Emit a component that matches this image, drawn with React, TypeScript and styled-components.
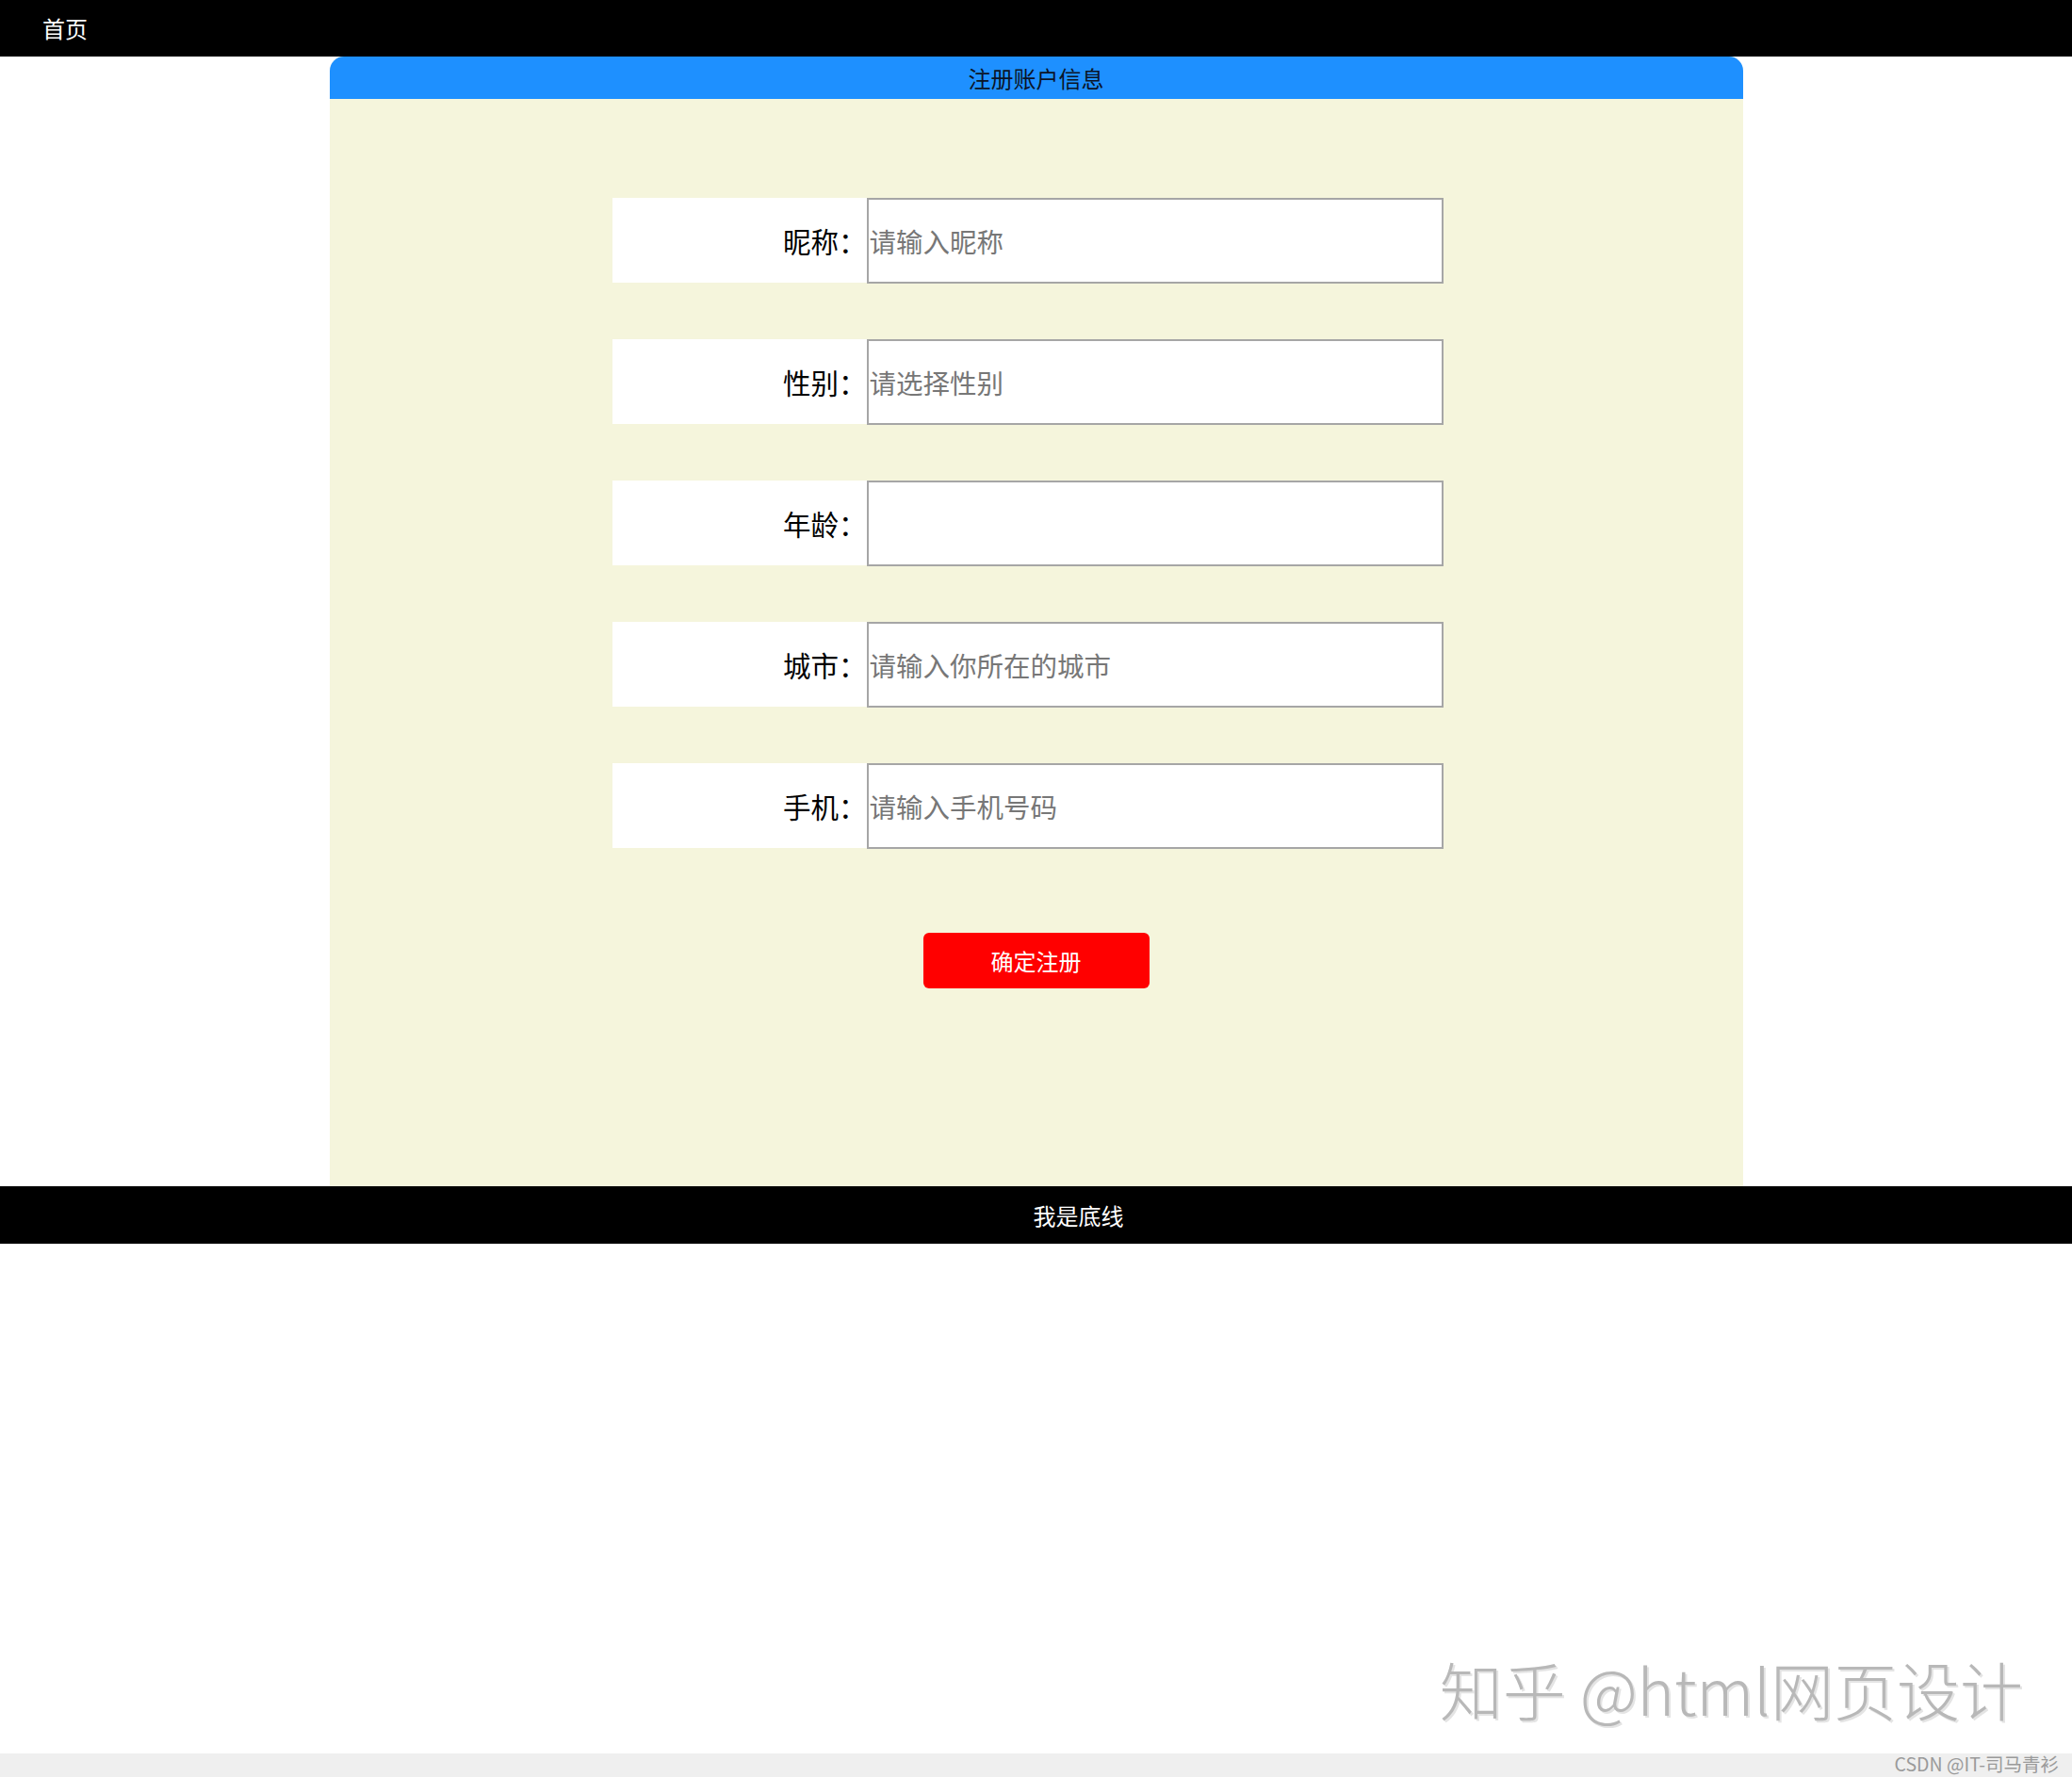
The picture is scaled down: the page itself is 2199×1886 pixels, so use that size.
import React from 'react'
import styled, { createGlobalStyle } from 'styled-components'

const GlobalStyle = createGlobalStyle`
  * {
    box-sizing: border-box;
  }

  body {
    margin: 0;
    background: #fff;
    font-family: 'Noto Sans CJK SC', 'Noto Sans', sans-serif;
  }
`

type Field = {
  label: string
  placeholder?: string
}

const fields: Field[] = [
  { label: '昵称：', placeholder: '请输入昵称' },
  { label: '性别：', placeholder: '请选择性别' },
  { label: '年龄：' },
  { label: '城市：', placeholder: '请输入你所在的城市' },
  { label: '手机：', placeholder: '请输入手机号码' },
]

export default function App() {
  return (
    <Page>
      <GlobalStyle />
      <TopBar>
        <NavLink>首页</NavLink>
      </TopBar>
      <Card>
        <CardHeader>注册账户信息</CardHeader>
        <Form onSubmit={(e) => e.preventDefault()}>
          {fields.map((field) => (
            <Row key={field.label}>
              <Label>{field.label}</Label>
              <Input type="text" placeholder={field.placeholder} />
            </Row>
          ))}
          <SubmitButton type="submit">确定注册</SubmitButton>
        </Form>
      </Card>
      <Footer>我是底线</Footer>
      <Blank>
        <Watermark>知乎 @html网页设计</Watermark>
      </Blank>
      <SourceStrip>CSDN @IT-司马青衫</SourceStrip>
    </Page>
  )
}

const Page = styled.div`
  display: flex;
  flex-direction: column;
  min-height: 1886px;
`

const TopBar = styled.header`
  height: 60px;
  background: #000;
  display: flex;
  align-items: center;
  padding-left: 45px;
`

const NavLink = styled.a`
  color: #fff;
  font-size: 24px;
  line-height: 1;
  cursor: pointer;
`

const Card = styled.main`
  width: 1500px;
  height: 1199px;
  margin: 0 auto;
  background: #f5f5dc;
  border-radius: 15px 15px 0 0;
  overflow: hidden;
`

const CardHeader = styled.h2`
  margin: 0;
  height: 45px;
  background: #1e90ff;
  color: #0b1426;
  font-size: 24px;
  font-weight: normal;
  line-height: 45px;
  text-align: center;
`

const Form = styled.form`
  display: flex;
  flex-direction: column;
  align-items: center;
  gap: 60px;
  padding-top: 105px;
`

const Row = styled.div`
  width: 900px;
  height: 90px;
  display: flex;
`

const Label = styled.label`
  width: 30%;
  background: #fff;
  color: #000;
  font-size: 29.5px;
  display: flex;
  align-items: center;
  justify-content: flex-end;
  padding-right: 0;
`

const Input = styled.input`
  width: 68%;
  height: 91px;
  margin: 0;
  padding: 0 1px;
  border: 2px solid #a6a6a6;
  background: #fff;
  font-family: inherit;
  font-size: 28.5px;
  outline: none;

  &::placeholder {
    color: #777;
  }
`

const SubmitButton = styled.button`
  width: 240px;
  height: 59px;
  margin-top: 30px;
  border: none;
  border-radius: 6px;
  background: #ff0000;
  color: #fff;
  font-family: inherit;
  font-size: 24px;
  cursor: pointer;
`

const Footer = styled.footer`
  height: 61px;
  background: #000;
  color: #fff;
  font-size: 24px;
  line-height: 61px;
  text-align: center;
  padding-left: 90px;
`

const Blank = styled.div`
  flex: 1;
  display: flex;
  align-items: flex-end;
  justify-content: flex-end;
  padding: 0 52px 36px 0;
`

const Watermark = styled.span`
  color: #b8b8b8;
  font-size: 67px;
  font-weight: 300;
  line-height: 1;
  text-shadow: 2px 2px 0 #e4e4e4;
  user-select: none;
`

const SourceStrip = styled.div`
  height: 25px;
  background: #efefef;
  color: #9a9a9a;
  font-size: 19.5px;
  line-height: 22px;
  text-align: right;
  padding-right: 14px;
`
